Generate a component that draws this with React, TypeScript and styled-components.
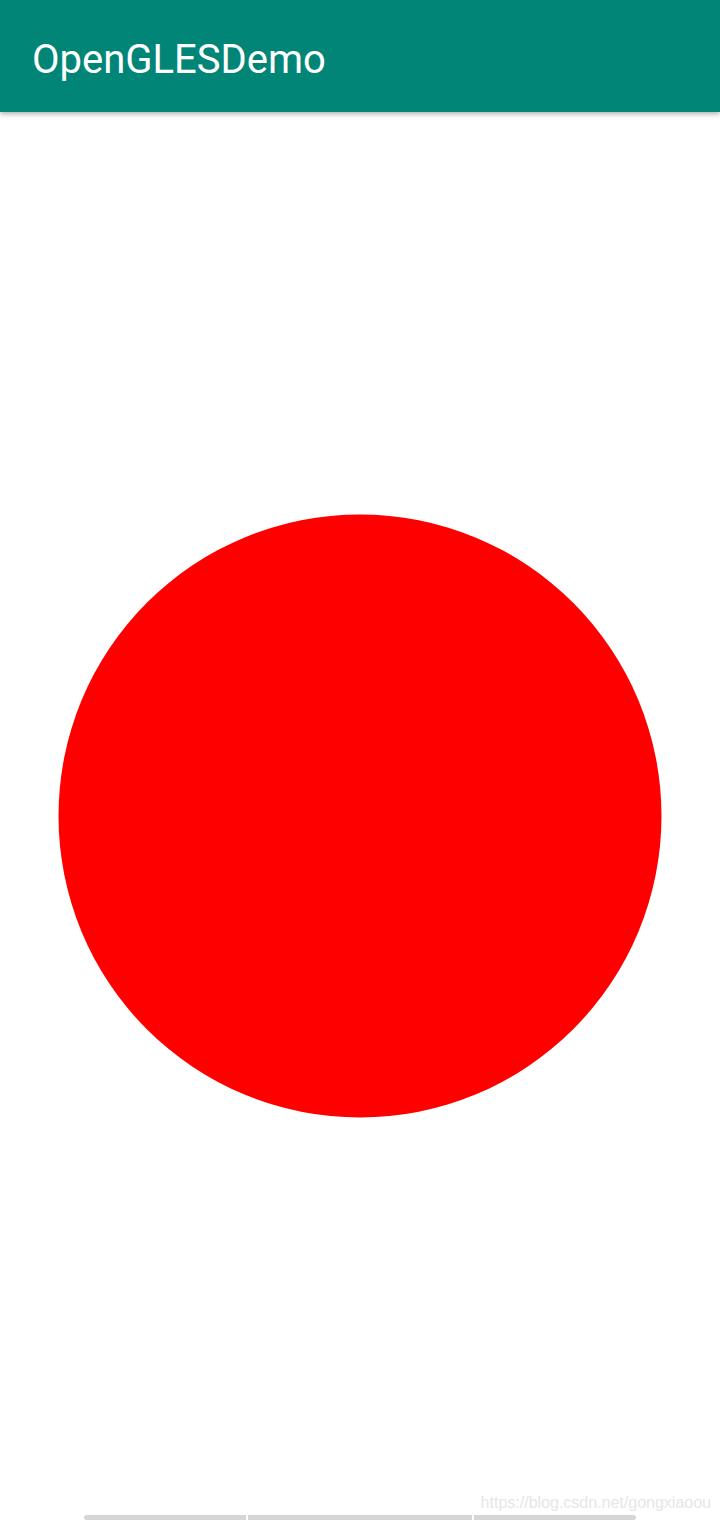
import React from "react";
import styled, { createGlobalStyle } from "styled-components";

const Global = createGlobalStyle`
  html, body { margin: 0; padding: 0; background: #ffffff; }
  body { font-family: Roboto, "Noto Sans", "Liberation Sans", sans-serif; }
`;

const Screen = styled.div`
  position: relative;
  width: 720px;
  height: 1520px;
  display: flex;
  flex-direction: column;
  background: #ffffff;
  overflow: hidden;
`;

const AppBar = styled.header`
  position: relative;
  z-index: 1;
  flex: 0 0 112px;
  box-sizing: border-box;
  display: flex;
  align-items: center;
  padding: 6px 0 0 32px;
  background: #008577;
  box-shadow: 0 2px 4px rgba(0, 0, 0, 0.22), 0 4px 6px rgba(0, 0, 0, 0.08);
`;

const Title = styled.h1`
  margin: 0;
  font-family: Roboto, "Noto Sans", sans-serif;
  font-weight: 400;
  font-size: 40px;
  color: #ffffff;
  letter-spacing: 0;
`;

const GlSurface = styled.main`
  flex: 1;
  display: flex;
  align-items: center;
  justify-content: center;
`;

const NavHandle = styled.div`
  position: absolute;
  left: 84px;
  bottom: 0;
  display: flex;
  gap: 2px;
`;

const NavSegment = styled.div<{ $w: number; $l?: boolean; $r?: boolean }>`
  width: ${(p) => p.$w}px;
  height: 5px;
  background: #d6d6d6;
  border-top-left-radius: ${(p) => (p.$l ? "3px" : "0")};
  border-bottom-left-radius: ${(p) => (p.$l ? "3px" : "0")};
  border-top-right-radius: ${(p) => (p.$r ? "3px" : "0")};
  border-bottom-right-radius: ${(p) => (p.$r ? "3px" : "0")};
`;

const Watermark = styled.div`
  position: absolute;
  right: 9px;
  bottom: 8px;
  font-family: "Liberation Sans", Arial, sans-serif;
  font-size: 16px;
  color: #e6e6e6;
`;

export default function App() {
  return (
    <>
      <Global />
      <Screen>
        <AppBar>
          <Title>OpenGLESDemo</Title>
        </AppBar>
        <GlSurface>
          <svg width="604" height="604" viewBox="0 0 604 604">
            <circle cx="302" cy="302" r="301.5" fill="#ff0000" />
          </svg>
        </GlSurface>
        <Watermark>https://blog.csdn.net/gongxiaoou</Watermark>
        <NavHandle>
          <NavSegment $w={162} $l />
          <NavSegment $w={224} />
          <NavSegment $w={162} $r />
        </NavHandle>
      </Screen>
    </>
  );
}
